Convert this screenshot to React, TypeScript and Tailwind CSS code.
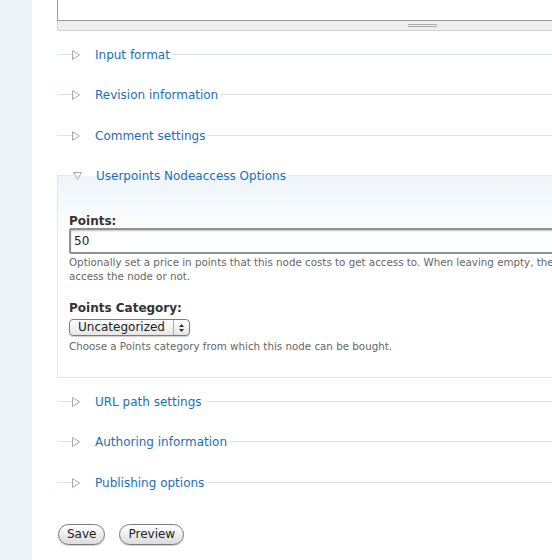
import React from 'react';

const font = { fontFamily: '"DejaVu Sans", Verdana, sans-serif' };

function Triangle({ open = false }: { open?: boolean }) {
  return open ? (
    <svg width="9" height="8" viewBox="0 0 9 8" className="inline-block align-middle">
      <polygon points="0.5,0.5 8.5,0.5 4.5,7.5" fill="none" stroke="#a9a9a9" strokeWidth="1" />
    </svg>
  ) : (
    <svg width="8" height="10" viewBox="0 0 8 10" className="inline-block align-middle">
      <polygon points="0.5,0.5 7.5,5 0.5,9.5" fill="none" stroke="#a9a9a9" strokeWidth="1" />
    </svg>
  );
}

function Collapsed({ title, className = '' }: { title: string; className?: string }) {
  return (
    <fieldset className={`border-t border-[#d8e5ee] pl-[13px] ${className}`}>
      <legend className="ml-[2px] pr-[2px] leading-[20px]">
        <span className="inline-block w-[8px]">
          <Triangle />
        </span>
        <a className="ml-[15px] text-[12px] text-[#1a6fb5] align-middle">{title}</a>
      </legend>
    </fieldset>
  );
}

export default function App() {
  return (
    <div className="flex min-h-[560px] bg-white text-[#333]" style={font}>
      <div className="w-[32px] shrink-0 bg-[#edf5fa]" />
      <div className="flex-1 overflow-hidden pl-[25px] pb-[16px]">
        {/* textarea tail */}
        <div className="w-[600px]">
          <div className="h-[21px] border-l border-b border-[#999] bg-white" />
          <div className="h-[10px] border-l border-b border-[#d4d4d4] bg-[#eeeeee] flex flex-col justify-center">
            <div className="ml-[350px] w-[29px] flex flex-col gap-[1px]">
              <div className="h-px bg-[#aaa]" />
              <div className="h-px bg-[#aaa]" />
            </div>
          </div>
        </div>

        <Collapsed title="Input format" className="mt-[13px]" />
        <Collapsed title="Revision information" className="mt-[20px]" />
        <Collapsed title="Comment settings" className="mt-[20px]" />

        <fieldset className="mt-[20px] w-[600px] border border-[#dde7ee] pl-[11px] pb-[24px] bg-[linear-gradient(to_bottom,#edf5fa,#ffffff_60px)]">
          <legend className="ml-[4px] pr-[2px] leading-[20px]">
            <span className="inline-block w-[9px]">
              <Triangle open />
            </span>
            <a className="ml-[14px] text-[12px] text-[#1a6fb5] align-middle">Userpoints Nodeaccess Options</a>
          </legend>

          <div className="mt-[27px]">
            <label className="block text-[12px] font-bold text-[#333] leading-[16px]">Points:</label>
            <div className="-mt-px h-[26px] border-2 border-[#8d9297] rounded-[2px] bg-white shadow-[inset_0_1px_2px_rgba(0,0,0,0.25)] pl-[3px] flex items-center text-[12px] text-[#222]">
              50
            </div>
            <div className="mt-[1px] text-[10.3px] leading-[14px] text-[#666] whitespace-nowrap">
              Optionally set a price in points that this node costs to get access to. When leaving empty, the
              <br />
              access the node or not.
            </div>
          </div>

          <div className="mt-[17px]">
            <label className="block text-[12px] font-bold text-[#333] leading-[16px]">Points Category:</label>
            <div className="mt-[3px] w-[121px] h-[17px] rounded-[4px] border border-[#7d7d7d] bg-[linear-gradient(to_bottom,#ffffff,#e6e6e6)] shadow-[0_1px_1px_rgba(0,0,0,0.2)] flex items-center">
              <span className="flex-1 pl-[8px] text-[12px] leading-[15px] text-[#222]">Uncategorized</span>
              <span className="w-[16px] h-full border-l border-[#aaa] flex flex-col items-center justify-center gap-[2px]">
                <svg width="5" height="3" viewBox="0 0 5 3"><polygon points="0,3 5,3 2.5,0" fill="#333" /></svg>
                <svg width="5" height="3" viewBox="0 0 5 3"><polygon points="0,0 5,0 2.5,3" fill="#333" /></svg>
              </span>
            </div>
            <div className="mt-[3px] text-[10.3px] leading-[14px] text-[#666] whitespace-nowrap">
              Choose a Points category from which this node can be bought.
            </div>
          </div>
        </fieldset>

        <Collapsed title="URL path settings" className="mt-[13px]" />
        <Collapsed title="Authoring information" className="mt-[20px]" />
        <Collapsed title="Publishing options" className="mt-[20px]" />

        <div className="mt-[31px] flex gap-[14px] ml-[1px]">
          <button className="h-[21px] px-[8px] rounded-full border border-[#7a7a7a] bg-[linear-gradient(to_bottom,#ffffff,#dcdcdc)] text-[12px] text-[#222] shadow-[0_1px_1px_rgba(0,0,0,0.2)]">
            Save
          </button>
          <button className="h-[21px] px-[8px] rounded-full border border-[#7a7a7a] bg-[linear-gradient(to_bottom,#ffffff,#dcdcdc)] text-[12px] text-[#222] shadow-[0_1px_1px_rgba(0,0,0,0.2)]">
            Preview
          </button>
        </div>
      </div>
    </div>
  );
}
